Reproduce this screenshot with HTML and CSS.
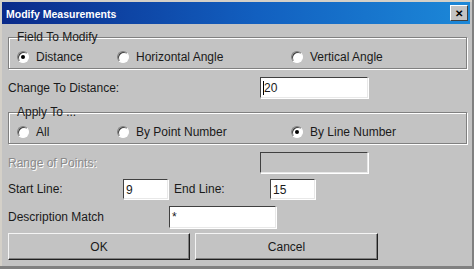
FILE: index.html
```html
<!DOCTYPE html>
<html>
	<head>
		<meta charset="utf-8">
		<link rel="stylesheet" href="styles.css">
	</head>
	<body>
		<div class="window">
			<div class="titlebar">
				<span class="title">Modify Measurements</span>
				<span class="close">&#x2715;</span>
			</div>

			<fieldset class="group group-field">
				<legend>Field To Modify</legend>
				<div class="radios">
					<label class="radio col1"><span class="dot checked"></span>Distance</label>
					<label class="radio col2"><span class="dot"></span>Horizontal Angle</label>
					<label class="radio"><span class="dot"></span>Vertical Angle</label>
				</div>
			</fieldset>

			<div class="row row-distance">
				<span class="label label-wide">Change To Distance:</span>
				<span class="input input-wide"><span class="caret"></span>20</span>
			</div>

			<fieldset class="group group-apply">
				<legend>Apply To ...</legend>
				<div class="radios">
					<label class="radio col1"><span class="dot"></span>All</label>
					<label class="radio col2"><span class="dot"></span>By Point Number</label>
					<label class="radio"><span class="dot checked"></span>By Line Number</label>
				</div>
			</fieldset>

			<div class="row row-range">
				<span class="label label-wide disabled">Range of Points:</span>
				<span class="input input-wide input-disabled"></span>
			</div>

			<div class="row row-lines">
				<span class="label label-start">Start Line:</span>
				<span class="input input-small">9</span>
				<span class="label label-end">End Line:</span>
				<span class="input input-small">15</span>
			</div>

			<div class="row row-desc">
				<span class="label label-desc">Description Match</span>
				<span class="input input-desc">*</span>
			</div>

			<div class="buttons">
				<button class="btn">OK</button>
				<button class="btn">Cancel</button>
			</div>
		</div>
	</body>
</html>
```

FILE: styles.css
```css
html, body {
	margin: 0;
	padding: 0;
}
body {
	width: 474px;
	height: 269px;
	background: #808080;
	font-family: "Liberation Sans", Arial, sans-serif;
	font-size: 12px;
	color: #1a1a1a;
	overflow: hidden;
}
.window {
	box-sizing: border-box;
	width: 472px;
	height: 266px;
	background: #c3c3c3;
	border-top: 2px solid #d4d0c8;
	border-left: 2px solid #d4d0c8;
}

/* title bar */
.titlebar {
	height: 22px;
	margin-right: 2px;
	display: flex;
	align-items: center;
	justify-content: space-between;
	background: linear-gradient(to right, #0a2a8a, #1260c0 55%, #1c88d8);
}
.title {
	color: #fff;
	font-weight: bold;
	font-size: 10.5px;
	padding-left: 4px;
	padding-top: 2px;
}
.close {
	box-sizing: border-box;
	width: 18px;
	height: 16px;
	margin-right: 2px;
	display: flex;
	align-items: center;
	justify-content: center;
	background: #c3c3c3;
	border: 1px solid;
	border-color: #fff #404040 #404040 #fff;
	font-size: 10px;
	font-weight: bold;
	color: #000;
}

/* group boxes */
.group {
	margin: 0 5px 0 6px;
	padding: 6px 0 5px 9px;
	border: 0;
	box-shadow: inset 1px 1px #808080, inset -1px -1px #808080, 1px 1px #fff, inset 2px 2px #fff;
}
.group legend {
	padding: 0 2px;
	margin-left: -2px;
	line-height: 14px;
}
.group-field {
	margin-top: 6px;
}
.group-apply {
	margin-top: 7px;
}
.radios {
	display: flex;
	align-items: center;
	height: 14px;
}
.radio {
	display: flex;
	align-items: center;
}
.col1 {
	width: 100px;
}
.col2 {
	width: 174px;
}
.dot {
	box-sizing: border-box;
	width: 12px;
	height: 12px;
	margin-right: 7px;
	border-radius: 50%;
	background: #fff;
	border: 1px solid;
	border-color: #808080 #fff #fff #808080;
	box-shadow: inset 1px 1px #404040;
	display: flex;
	align-items: center;
	justify-content: center;
}
.dot.checked::after {
	content: "";
	width: 4px;
	height: 4px;
	border-radius: 50%;
	background: #000;
}

/* form rows */
.row {
	display: flex;
	align-items: center;
	padding-left: 6px;
}
.label {
	white-space: nowrap;
}
.label-wide {
	width: 252px;
}
.disabled {
	color: #8a8a8a;
	text-shadow: 1px 1px #fff;
}
.input {
	box-sizing: border-box;
	height: 21px;
	padding: 3px 0 0 2px;
	display: flex;
	background: #fff;
	border: 1px solid;
	border-color: #404040 #e8e8e8 #e8e8e8 #404040;
	box-shadow: 1px 1px #fff;
	line-height: 14px;
}
.caret {
	width: 1px;
	height: 14px;
	background: #000;
}
.input-wide {
	width: 108px;
}
.input-disabled {
	background: #c3c3c3;
}
.input-small {
	width: 45px;
	height: 20px;
}
.input-desc {
	width: 107px;
	height: 22px;
	margin-left: 65px;
}
.row-distance {
	margin-top: 8px;
}
.row-range {
	margin-top: 8px;
}
.label-start {
	width: 115px;
}
.label-end {
	width: 96px;
	margin-left: 6px;
}
.row-lines {
	margin-top: 6px;
}
.row-desc {
	margin-top: 7px;
}

/* buttons */
.buttons {
	display: flex;
	gap: 5px;
	padding-left: 6px;
	margin-top: 5px;
}
.btn {
	box-sizing: border-box;
	width: 182px;
	height: 27px;
	padding: 0;
	background: #c3c3c3;
	font-family: "Liberation Sans", Arial, sans-serif;
	font-size: 12px;
	color: #1a1a1a;
	border: 1px solid;
	border-color: #f4f4f4 #202020 #202020 #f4f4f4;
	box-shadow: inset -1px -1px #808080;
}
.btn:last-child {
	width: 183px;
}
```
